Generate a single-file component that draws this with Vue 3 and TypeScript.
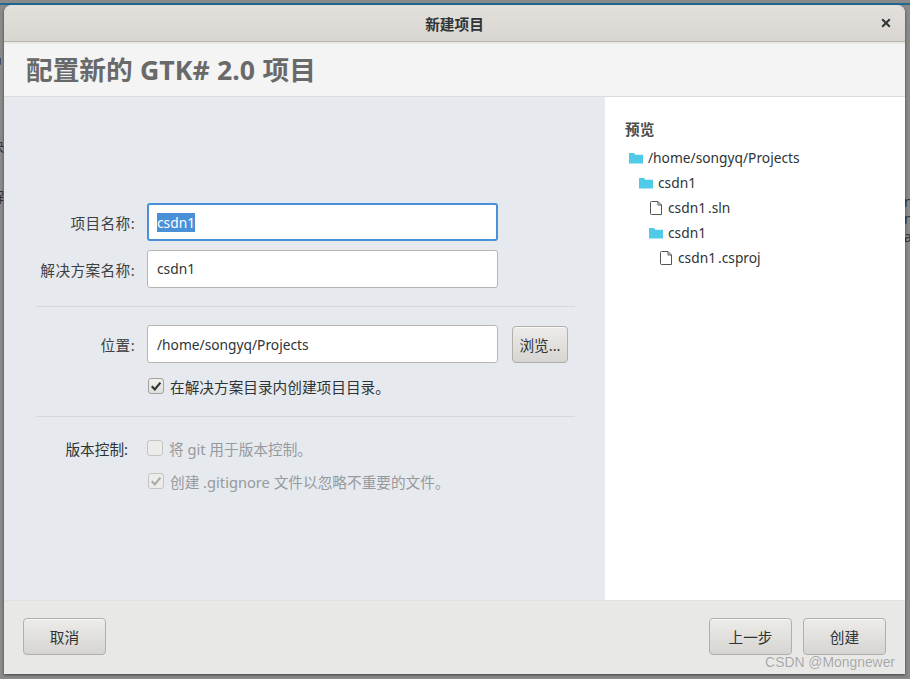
<script setup lang="ts">
interface TreeRow { stem: string; ext?: string; kind: 'folder' | 'file'; depth: number }
const tree: TreeRow[] = [
  { stem: '/home/songyq/Projects', kind: 'folder', depth: 0 },
  { stem: 'csdn1', kind: 'folder', depth: 1 },
  { stem: 'csdn1', ext: '.sln', kind: 'file', depth: 2 },
  { stem: 'csdn1', kind: 'folder', depth: 2 },
  { stem: 'csdn1', ext: '.csproj', kind: 'file', depth: 3 },
]
</script>

<template>
  <div class="desktop">
    <span class="peek pl0">中</span>
    <span class="peek pl1">决</span>
    <span class="peek pl2">解</span>
    <span class="peek pr1">n</span>
    <span class="peek pr2">n</span>
    <span class="peek pr3">a</span>
    <div class="topline"></div>
    <div class="window">
      <div class="titlebar">
        <span class="title">新建项目</span>
        <svg class="close" width="10" height="10" viewBox="0 0 10 10">
          <path d="M1.2 1.2 L8.8 8.8 M8.8 1.2 L1.2 8.8" stroke="#2e3436" stroke-width="2" fill="none" />
        </svg>
      </div>
      <div class="header">配置新的 GTK# 2.0 项目</div>
      <div class="body">
        <div class="form">
          <div class="row">
            <span class="label">项目名称:</span>
            <div class="input focused"><span class="sel">csdn1</span></div>
          </div>
          <div class="row second">
            <span class="label">解决方案名称:</span>
            <div class="input">csdn1</div>
          </div>
          <div class="sep sep1"></div>
          <div class="row">
            <span class="label">位置:</span>
            <div class="input path">/home/songyq/Projects</div>
            <button class="btn browse">浏览...</button>
          </div>
          <div class="check-row loc">
            <span class="box">
              <svg width="12" height="12" viewBox="0 0 12 12">
                <path d="M1.8 6.2 L4.8 9.4 L10.4 2.6" stroke="#2e3436" stroke-width="2.2" fill="none" />
              </svg>
            </span>
            <span>在解决方案目录内创建项目目录。</span>
          </div>
          <div class="sep sep2"></div>
          <div class="check-row vcs">
            <span class="label strong">版本控制:</span>
            <span class="box disabled"></span>
            <span class="muted">将 git 用于版本控制。</span>
          </div>
          <div class="check-row ignore">
            <span class="box disabled">
              <svg width="12" height="12" viewBox="0 0 12 12">
                <path d="M1.8 6.2 L4.8 9.4 L10.4 2.6" stroke="#a9abab" stroke-width="2.2" fill="none" />
              </svg>
            </span>
            <span class="muted">创建 .gitignore 文件以忽略不重要的文件。</span>
          </div>
        </div>
        <div class="preview">
          <div class="preview-title">预览</div>
          <div
            v-for="(item, i) in tree"
            :key="i"
            class="tree-row"
            :style="{ marginLeft: item.depth * 10 + 'px' }"
          >
            <svg v-if="item.kind === 'folder'" class="ico" width="16" height="16" viewBox="0 0 16 16">
              <path d="M1 3.5 Q1 3 1.5 3 H6 L7.5 4.8 H14.5 Q15 4.8 15 5.3 V13 Q15 13.5 14.5 13.5 H1.5 Q1 13.5 1 13 Z" fill="#4fcbe8" />
            </svg>
            <svg v-else class="ico" width="16" height="16" viewBox="0 0 16 16">
              <path d="M3.5 1.5 H10 L13.5 5 V14.5 H3.5 Q2.5 14.5 2.5 13.5 V2.5 Q2.5 1.5 3.5 1.5 Z M10 1.5 V5 H13.5" fill="#fff" stroke="#555" stroke-width="1" />
            </svg>
            <span>{{ item.stem }}<span v-if="item.ext" class="ext">{{ item.ext }}</span></span>
          </div>
        </div>
      </div>
      <div class="footer">
        <button class="btn wide">取消</button>
        <div class="footer-right">
          <button class="btn wide">上一步</button>
          <button class="btn wide">创建</button>
        </div>
      </div>
    </div>
    <span class="watermark">CSDN @Mongnewer</span>
  </div>
</template>

<style>
html, body { margin: 0; padding: 0; background: #8c8c8c; }
</style>

<style scoped>
.desktop {
  position: relative;
  width: 910px;
  height: 679px;
  overflow: hidden;
  box-sizing: border-box;
  padding: 5px 5px 0 4px;
  background: #8a8a8a;
  font-family: "Noto Sans", "Noto Sans CJK SC", sans-serif;
  font-size: 14.67px;
  color: #2e3436;
}
.topline {
  position: absolute;
  left: 0;
  right: 0;
  top: 3px;
  height: 2px;
  background: #1d6a96;
}
.peek { position: absolute; color: #333; font-size: 14px; line-height: 14px; }
.pl0 { left: -12px; top: 55px; }
.pl1 { left: -10px; top: 139px; }
.pl2 { left: -10px; top: 190px; }
.pr1 { left: 904px; top: 195px; }
.pr2 { left: 904px; top: 212px; }
.pr3 { left: 904px; top: 230px; }
.window {
  position: relative;
  width: 901px;
  height: 669px;
  display: flex;
  flex-direction: column;
  border-radius: 8px 8px 0 0;
  background: #e8e8e6;
  overflow: hidden;
  box-shadow: 0 1px 3px rgba(0, 0, 0, 0.55);
}
.titlebar {
  position: relative;
  height: 36px;
  flex: none;
  display: flex;
  align-items: center;
  justify-content: center;
  background: linear-gradient(#e3dfdb, #d9d6d1);
  border-bottom: 1px solid #b8b4ac;
}
.title { font-weight: 700; color: #2e3436; }
.close { position: absolute; right: 14px; top: 13px; }
.header {
  height: 52px;
  flex: none;
  margin-top: 1px;
  border-top: 1px solid #ebebe9;
  border-bottom: 1px solid #dcdcdc;
  background: #f4f4f4;
  padding-left: 22px;
  line-height: 52px;
  font-size: 26.67px;
  font-weight: 700;
  word-spacing: 0.5px;
  color: #696969;
  white-space: nowrap;
}
.body {
  flex: 1;
  display: flex;
  min-height: 0;
}
.form {
  width: 601px;
  flex: none;
  box-sizing: border-box;
  background: #e6e9ee;
  padding: 106px 30px 0 32px;
}
.row {
  display: flex;
  align-items: center;
  height: 38px;
}
.second { margin-top: 9px; }
.label {
  width: 99px;
  margin-right: 12px;
  text-align: right;
  white-space: nowrap;
  flex: none;
  letter-spacing: 0.4px;
  color: #3c4043;
}
.label.strong {
  width: 92px;
  margin-right: 19px;
  letter-spacing: 0;
  color: #2e3436;
}
.input {
  width: 351px;
  height: 38px;
  box-sizing: border-box;
  flex: none;
  padding: 0 9px;
  line-height: 35px;
  font-size: 13.75px;
  background: #fff;
  border: 1px solid #b8b6b0;
  border-radius: 3px;
  color: #2e3436;
}
.input.path { line-height: 37px; }
.focused {
  border: 2px solid #4a90d9;
  padding: 0 8px;
  line-height: 32px;
}
.sel {
  display: inline-block;
  background: #4a90d9;
  color: #fff;
  line-height: 19px;
  vertical-align: middle;
}
.sep { height: 1px; background: #d5d7d9; }
.sep1 { margin-top: 18px; margin-bottom: 18px; }
.sep2 { margin-top: 22px; margin-bottom: 23px; }
.btn {
  font: inherit;
  color: #2e3436;
  height: 37px;
  border: 1px solid #b0afa9;
  border-radius: 4px;
  background: linear-gradient(#edecea, #d6d5d1);
  box-shadow: inset 0 1px 0 #f7f7f6;
  padding: 0;
  flex: none;
}
.browse { width: 56px; margin-left: 14px; }
.wide { width: 83px; }
.check-row {
  display: flex;
  align-items: center;
  height: 16px;
  white-space: nowrap;
  padding-left: 112px;
}
.loc { margin-top: 15px; }
.vcs { padding-left: 0; }
.ignore { margin-top: 17px; }
.box {
  width: 16px;
  height: 16px;
  box-sizing: border-box;
  flex: none;
  margin-right: 6px;
  display: flex;
  align-items: center;
  justify-content: center;
  border: 1px solid #a3a29d;
  border-radius: 3px;
  background: linear-gradient(#f2f1ef, #dededa);
}
.box.disabled {
  border-color: #c4c4c2;
  background: #ececea;
}
.muted { color: #97999c; }
.preview {
  flex: 1;
  background: #fff;
  padding: 22px 0 0 20px;
  box-sizing: border-box;
}
.preview-title {
  font-weight: 700;
  line-height: 20px;
  margin-bottom: 6px;
  color: #4a4d4e;
}
.tree-row {
  display: flex;
  align-items: center;
  height: 25px;
  padding-left: 3px;
  white-space: nowrap;
  font-size: 13.75px;
}
.ext { margin-left: 2px; }
.ico { margin-right: 4px; flex: none; }
.footer {
  height: 74px;
  flex: none;
  box-sizing: border-box;
  display: flex;
  justify-content: space-between;
  padding: 17px 19px 0 19px;
  background: #e8e8e6;
  border-top: 1px solid #e1e1df;
}
.footer-right { display: flex; gap: 11px; }
.watermark {
  position: absolute;
  right: 15px;
  bottom: 9px;
  font-family: "Liberation Sans", sans-serif;
  font-size: 13.9px;
  line-height: 16px;
  color: #a6a6a6;
  text-shadow: 0 0 1px #fff;
}
</style>
